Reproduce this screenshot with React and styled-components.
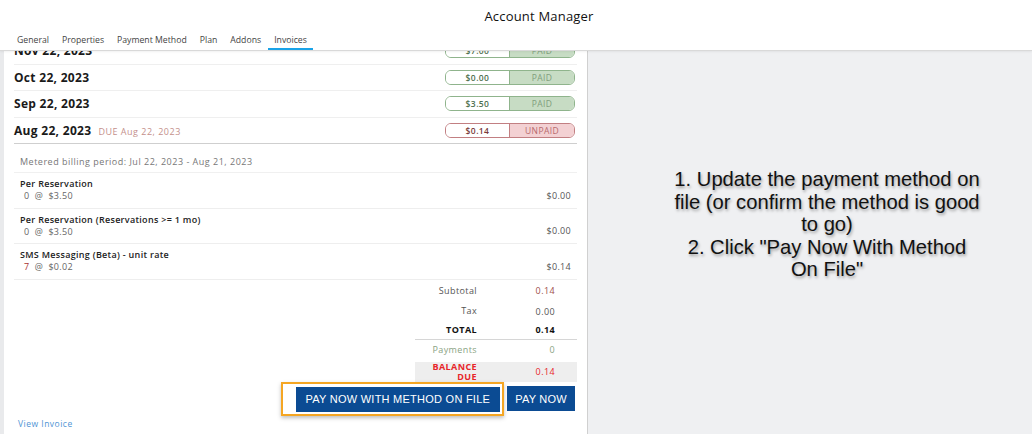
import React from 'react';
import styled, { createGlobalStyle } from 'styled-components';

const GlobalStyle = createGlobalStyle`
  html, body { margin: 0; padding: 0; }
  body {
    width: 1032px;
    height: 434px;
    overflow: hidden;
    background: #fff;
    font-family: 'Open Sans', 'Noto Sans', sans-serif;
  }
`;

const Page = styled.div`
  display: flex;
  flex-direction: column;
  height: 434px;
`;

const Header = styled.div`
  height: 51px;
  border-bottom: 1px solid #d9d9d9;
  display: flex;
  flex-direction: column;
  box-sizing: border-box;
  position: relative;
  z-index: 2;
  background: #fff;
  box-shadow: 0 1px 2px rgba(0,0,0,0.06);
`;

const Title = styled.div`
  text-align: center;
  font-size: 13px;
  font-weight: 500;
  color: #111;
  padding: 7px 0 0 46px;
  height: 26px;
  letter-spacing: 0.2px;
`;

const Tabs = styled.div`
  display: flex;
  padding-left: 10.5px;
  margin-top: auto;
`;

const Tab = styled.div`
  font-size: 8.7px;
  line-height: 12px;
  color: #444;
  padding: 0 6.5px 2px;
  border-bottom: 2px solid ${p => (p.active ? '#1aa3e8' : 'transparent')};
`;

const Body = styled.div`
  flex: 1;
  display: flex;
  min-height: 0;
`;

const LeftPane = styled.div`
  width: 588px;
  border-left: 4px solid #e9eaec;
  border-right: 1px solid #d0d0d0;
  box-sizing: border-box;
  background: #fff;
  overflow: hidden;
  display: flex;
  flex-direction: column;
  padding: 0 10px;
`;

const RightPane = styled.div`
  flex: 1;
  background: #eff0f2;
  display: flex;
  align-items: flex-start;
  justify-content: center;
  padding-top: 117px;
`;

const Note = styled.div`
  font-family: 'Liberation Sans', Arial, sans-serif;
  font-size: 20.2px;
  line-height: 22.5px;
  color: #111;
  text-align: center;
  width: 310px;
  text-shadow: 1px 2px 3px rgba(0,0,0,0.35);
  margin-left: 34px;
`;

const InvoiceList = styled.div`
  margin-top: -13px;
`;

const InvoiceRow = styled.div`
  display: flex;
  align-items: center;
  height: 25.5px;
  border-bottom: 1px solid ${p => (p.last ? '#cfcfcf' : '#efefef')};
  padding-right: 2px;
`;

const DateText = styled.div`
  font-size: 12px;
  font-weight: 700;
  color: #1a1a1a;
  letter-spacing: 0.3px;
`;

const DueText = styled.span`
  font-size: 9px;
  font-weight: 400;
  color: #c4908b;
  margin-left: 7px;
  letter-spacing: 0.5px;
`;

const Pill = styled.div`
  margin-left: auto;
  display: flex;
  width: 128px;
  height: 13px;
  border: 1px solid ${p => (p.unpaid ? '#c27f82' : '#8fb48c')};
  border-radius: 6px;
  overflow: hidden;
  font-size: 8.5px;
  letter-spacing: 0.4px;
`;

const PillAmount = styled.div`
  width: 63px;
  border-right: 1px solid ${p => (p.unpaid ? '#c27f82' : '#8fb48c')};
  background: #fff;
  color: ${p => (p.unpaid ? '#7a3a3a' : '#4f6f4f')};
  font-weight: 600;
  display: flex;
  align-items: center;
  justify-content: center;
`;

const PillStatus = styled.div`
  flex: 1;
  background: ${p => (p.unpaid ? '#f3d1d3' : '#c7dcc4')};
  color: ${p => (p.unpaid ? '#b76a6e' : '#7f9e7c')};
  display: flex;
  align-items: center;
  justify-content: center;
`;

const Period = styled.div`
  font-size: 9px;
  color: #777;
  height: 29px;
  padding: 6px 0 0 6px;
  display: flex;
  align-items: center;
  box-sizing: border-box;
  border-bottom: 1px solid #f0f0f0;
  letter-spacing: 0.5px;
`;

const LineItem = styled.div`
  display: flex;
  align-items: flex-end;
  box-sizing: border-box;
  height: 35.5px;
  padding: 5px 6px 6px 6px;
  border-bottom: 1px solid #eeeeee;
`;

const ItemText = styled.div`
  flex: 1;
  align-self: flex-start;
`;

const ItemName = styled.div`
  font-size: 9px;
  line-height: 12px;
  font-weight: 600;
  color: #222;
  letter-spacing: 0.3px;
`;

const ItemDetail = styled.div`
  font-size: 9px;
  line-height: 12px;
  color: ${p => (p.red ? '#a33' : '#666')};
  padding-left: 4px;
  letter-spacing: 0.3px;
  span { color: #666; }
`;

const ItemAmount = styled.div`
  font-size: 9px;
  color: #555;
  letter-spacing: 0.3px;
`;

const Totals = styled.div`
  align-self: flex-end;
  width: 162px;
`;

const TotalRow = styled.div`
  display: grid;
  grid-template-columns: 62px 78px;
  align-items: center;
  box-sizing: border-box;
  height: ${p => p.h || 19.5}px;
  margin-bottom: ${p => p.mb || 0}px;
  background: ${p => (p.shade ? '#eeeeee' : 'transparent')};
  border-bottom: ${p => (p.divider ? '1px solid #d6d6d6' : 'none')};
  font-size: 9px;
  letter-spacing: 0.4px;
`;

const TotalLabel = styled.div`
  text-align: right;
  color: ${p => p.color || '#555'};
  font-weight: ${p => (p.bold ? 700 : 400)};
  line-height: 10px;
`;

const TotalValue = styled.div`
  text-align: right;
  color: ${p => p.color || '#555'};
  font-weight: ${p => (p.bold ? 700 : 400)};
`;

const Actions = styled.div`
  display: flex;
  justify-content: flex-end;
  align-items: center;
  gap: 3px;
  padding-right: 2px;
`;

const Highlight = styled.div`
  border: 2px solid #f5a623;
  padding: 3px 2px 2px 13px;
  box-shadow: 0 2px 4px rgba(0,0,0,0.25);
`;

const Button = styled.button`
  display: block;
  background: #0b4b93;
  color: #fff;
  border: none;
  height: 25px;
  padding: 0 ${p => (p.wide ? 10 : 8)}px;
  font-family: 'Liberation Sans', Arial, sans-serif;
  font-size: 11px;
  letter-spacing: 0.25px;
  cursor: pointer;
`;

const ViewLink = styled.a`
  margin-top: 2px;
  padding-left: 4px;
  font-size: 8.5px;
  line-height: 12px;
  color: #4f94d4;
  letter-spacing: 0.5px;
  text-decoration: none;
`;

const invoices = [
  { date: 'Nov 22, 2023', amount: '$7.00' },
  { date: 'Oct 22, 2023', amount: '$0.00' },
  { date: 'Sep 22, 2023', amount: '$3.50' },
  { date: 'Aug 22, 2023', amount: '$0.14', unpaid: true, due: 'DUE Aug 22, 2023' },
];

const items = [
  { name: 'Per Reservation', qty: '0', rate: '$3.50', amount: '$0.00' },
  { name: 'Per Reservation (Reservations >= 1 mo)', qty: '0', rate: '$3.50', amount: '$0.00' },
  { name: 'SMS Messaging (Beta) - unit rate', qty: '7', rate: '$0.02', amount: '$0.14', red: true },
];

const tabs = ['General', 'Properties', 'Payment Method', 'Plan', 'Addons', 'Invoices'];

export default function App() {
  return (
    <Page>
      <GlobalStyle />
      <Header>
        <Title>Account Manager</Title>
        <Tabs>
          {tabs.map(t => (
            <Tab key={t} active={t === 'Invoices'}>{t}</Tab>
          ))}
        </Tabs>
      </Header>
      <Body>
        <LeftPane>
          <InvoiceList>
            {invoices.map((inv, i) => (
              <InvoiceRow key={inv.date} last={i === invoices.length - 1}>
                <DateText>
                  {inv.date}
                  {inv.due && <DueText>{inv.due}</DueText>}
                </DateText>
                <Pill unpaid={inv.unpaid}>
                  <PillAmount unpaid={inv.unpaid}>{inv.amount}</PillAmount>
                  <PillStatus unpaid={inv.unpaid}>{inv.unpaid ? 'UNPAID' : 'PAID'}</PillStatus>
                </Pill>
              </InvoiceRow>
            ))}
          </InvoiceList>
          <Period>Metered billing period: Jul 22, 2023 - Aug 21, 2023</Period>
          {items.map(it => (
            <LineItem key={it.name}>
              <ItemText>
                <ItemName>{it.name}</ItemName>
                <ItemDetail red={it.red}>
                  {it.qty} <span>&nbsp;@&nbsp; {it.rate}</span>
                </ItemDetail>
              </ItemText>
              <ItemAmount>{it.amount}</ItemAmount>
            </LineItem>
          ))}
          <Totals>
            <TotalRow h={22}>
              <TotalLabel>Subtotal</TotalLabel>
              <TotalValue color="#a0504c">0.14</TotalValue>
            </TotalRow>
            <TotalRow h={19}>
              <TotalLabel>Tax</TotalLabel>
              <TotalValue>0.00</TotalValue>
            </TotalRow>
            <TotalRow divider h={19}>
              <TotalLabel bold color="#111">TOTAL</TotalLabel>
              <TotalValue bold color="#111">0.14</TotalValue>
            </TotalRow>
            <TotalRow h={20} mb={2}>
              <TotalLabel color="#8aa383">Payments</TotalLabel>
              <TotalValue color="#8aa383">0</TotalValue>
            </TotalRow>
            <TotalRow shade h={20}>
              <TotalLabel bold color="#e8262b">BALANCE<br />DUE</TotalLabel>
              <TotalValue color="#e8262b">0.14</TotalValue>
            </TotalRow>
          </Totals>
          <Actions>
            <Highlight>
              <Button wide>PAY NOW WITH METHOD ON FILE</Button>
            </Highlight>
            <Button>PAY NOW</Button>
          </Actions>
          <ViewLink href="#">View Invoice</ViewLink>
        </LeftPane>
        <RightPane>
          <Note>
            1. Update the payment method on file (or confirm the method is good to go)
            <br />
            2. Click "Pay Now With Method On File"
          </Note>
        </RightPane>
      </Body>
    </Page>
  );
}
